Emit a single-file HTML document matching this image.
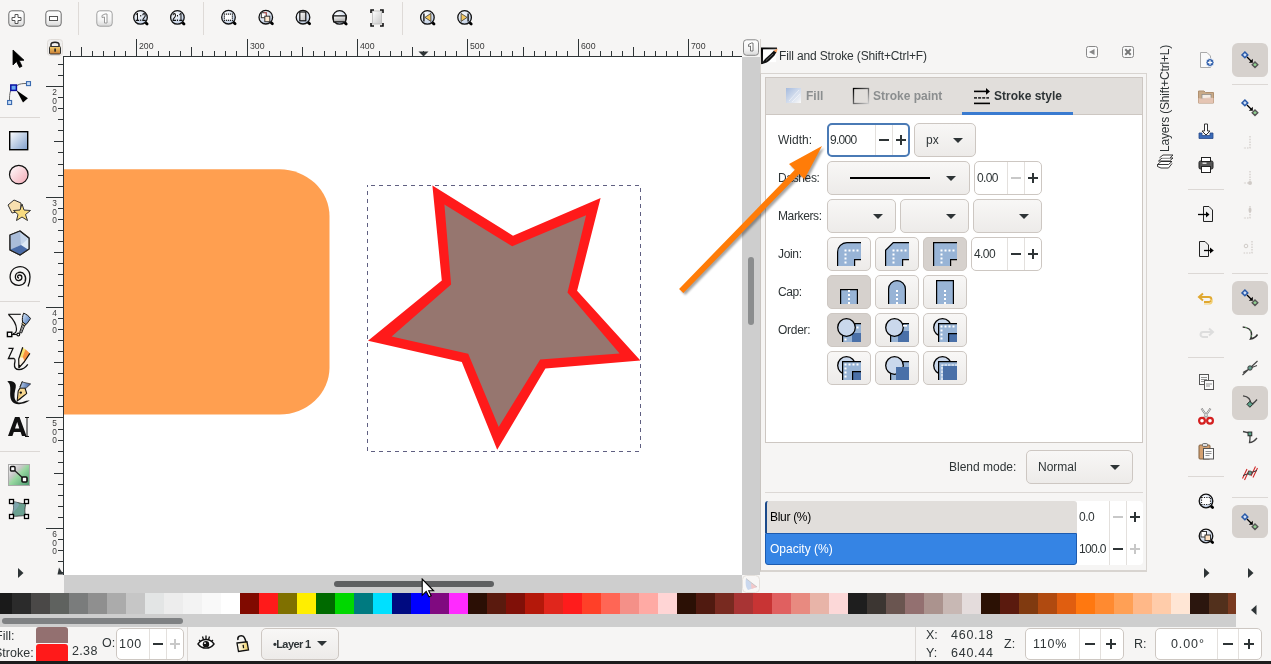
<!DOCTYPE html>
<html><head><meta charset="utf-8"><style>
*{box-sizing:border-box;margin:0;padding:0}
html,body{width:1271px;height:664px;overflow:hidden;background:#f6f5f4;font-family:"Liberation Sans", sans-serif;color:#2e3436}
.a{position:absolute}
.t{position:absolute;white-space:nowrap;line-height:1}
.btn{position:absolute;border:1px solid #cdc7c2;border-radius:5px;background:linear-gradient(#f8f7f6,#edebe9)}
.act{background:#d6d1cd;border-color:#cdc7c2}
.spin{position:absolute;border:1px solid #cdc7c2;border-radius:5px;background:#fff}
.sep{position:absolute;background:#e3e0dd}
.tri{position:absolute;width:0;height:0;border-left:5px solid transparent;border-right:5px solid transparent;border-top:5px solid #2e3436}
</style></head><body><div style="position:absolute;left:0;top:0;width:1271px;height:664px;will-change:transform">

<div class="a" style="left:64px;top:57px;width:678px;height:518px;background:#fff"></div>
<svg class="a" style="left:0;top:0" width="761" height="575" shape-rendering="crispEdges">
<g fill="#2e3436">
<rect x="63" y="56" width="679" height="1"/>
<rect x="63" y="56" width="1" height="519"/>
<rect x="70" y="51" width="1" height="5"/><rect x="81" y="47" width="1" height="9"/><rect x="92" y="51" width="1" height="5"/><rect x="103" y="51" width="1" height="5"/><rect x="114" y="51" width="1" height="5"/><rect x="125" y="51" width="1" height="5"/><rect x="136" y="39" width="1" height="17"/><rect x="147" y="51" width="1" height="5"/><rect x="158" y="51" width="1" height="5"/><rect x="169" y="51" width="1" height="5"/><rect x="180" y="51" width="1" height="5"/><rect x="191" y="47" width="1" height="9"/><rect x="202" y="51" width="1" height="5"/><rect x="214" y="51" width="1" height="5"/><rect x="225" y="51" width="1" height="5"/><rect x="236" y="51" width="1" height="5"/><rect x="247" y="39" width="1" height="17"/><rect x="258" y="51" width="1" height="5"/><rect x="269" y="51" width="1" height="5"/><rect x="280" y="51" width="1" height="5"/><rect x="291" y="51" width="1" height="5"/><rect x="302" y="47" width="1" height="9"/><rect x="313" y="51" width="1" height="5"/><rect x="324" y="51" width="1" height="5"/><rect x="335" y="51" width="1" height="5"/><rect x="346" y="51" width="1" height="5"/><rect x="357" y="39" width="1" height="17"/><rect x="368" y="51" width="1" height="5"/><rect x="379" y="51" width="1" height="5"/><rect x="390" y="51" width="1" height="5"/><rect x="401" y="51" width="1" height="5"/><rect x="412" y="47" width="1" height="9"/><rect x="423" y="51" width="1" height="5"/><rect x="434" y="51" width="1" height="5"/><rect x="445" y="51" width="1" height="5"/><rect x="456" y="51" width="1" height="5"/><rect x="467" y="39" width="1" height="17"/><rect x="479" y="51" width="1" height="5"/><rect x="490" y="51" width="1" height="5"/><rect x="501" y="51" width="1" height="5"/><rect x="512" y="51" width="1" height="5"/><rect x="523" y="47" width="1" height="9"/><rect x="534" y="51" width="1" height="5"/><rect x="545" y="51" width="1" height="5"/><rect x="556" y="51" width="1" height="5"/><rect x="567" y="51" width="1" height="5"/><rect x="578" y="39" width="1" height="17"/><rect x="589" y="51" width="1" height="5"/><rect x="600" y="51" width="1" height="5"/><rect x="611" y="51" width="1" height="5"/><rect x="622" y="51" width="1" height="5"/><rect x="633" y="47" width="1" height="9"/><rect x="644" y="51" width="1" height="5"/><rect x="655" y="51" width="1" height="5"/><rect x="666" y="51" width="1" height="5"/><rect x="677" y="51" width="1" height="5"/><rect x="688" y="39" width="1" height="17"/><rect x="699" y="51" width="1" height="5"/><rect x="710" y="51" width="1" height="5"/><rect x="721" y="51" width="1" height="5"/><rect x="732" y="51" width="1" height="5"/><rect x="58" y="64" width="5" height="1"/><rect x="58" y="75" width="5" height="1"/><rect x="46" y="86" width="17" height="1"/><rect x="58" y="97" width="5" height="1"/><rect x="58" y="108" width="5" height="1"/><rect x="58" y="119" width="5" height="1"/><rect x="58" y="130" width="5" height="1"/><rect x="54" y="141" width="9" height="1"/><rect x="58" y="152" width="5" height="1"/><rect x="58" y="164" width="5" height="1"/><rect x="58" y="175" width="5" height="1"/><rect x="58" y="186" width="5" height="1"/><rect x="46" y="197" width="17" height="1"/><rect x="58" y="208" width="5" height="1"/><rect x="58" y="219" width="5" height="1"/><rect x="58" y="230" width="5" height="1"/><rect x="58" y="241" width="5" height="1"/><rect x="54" y="252" width="9" height="1"/><rect x="58" y="263" width="5" height="1"/><rect x="58" y="274" width="5" height="1"/><rect x="58" y="285" width="5" height="1"/><rect x="58" y="296" width="5" height="1"/><rect x="46" y="307" width="17" height="1"/><rect x="58" y="318" width="5" height="1"/><rect x="58" y="329" width="5" height="1"/><rect x="58" y="340" width="5" height="1"/><rect x="58" y="351" width="5" height="1"/><rect x="54" y="362" width="9" height="1"/><rect x="58" y="373" width="5" height="1"/><rect x="58" y="384" width="5" height="1"/><rect x="58" y="395" width="5" height="1"/><rect x="58" y="406" width="5" height="1"/><rect x="46" y="417" width="17" height="1"/><rect x="58" y="429" width="5" height="1"/><rect x="58" y="440" width="5" height="1"/><rect x="58" y="451" width="5" height="1"/><rect x="58" y="462" width="5" height="1"/><rect x="54" y="473" width="9" height="1"/><rect x="58" y="484" width="5" height="1"/><rect x="58" y="495" width="5" height="1"/><rect x="58" y="506" width="5" height="1"/><rect x="58" y="517" width="5" height="1"/><rect x="46" y="528" width="17" height="1"/><rect x="58" y="539" width="5" height="1"/><rect x="58" y="550" width="5" height="1"/><rect x="58" y="561" width="5" height="1"/><rect x="58" y="572" width="5" height="1"/>
</g>
<g fill="#3a3a3a" font-family="Liberation Sans" font-size="9.5" shape-rendering="auto"><text transform="translate(139 49) scale(0.9 1)" font-size="9.7">200</text><text transform="translate(250 49) scale(0.9 1)" font-size="9.7">300</text><text transform="translate(360 49) scale(0.9 1)" font-size="9.7">400</text><text transform="translate(470 49) scale(0.9 1)" font-size="9.7">500</text><text transform="translate(581 49) scale(0.9 1)" font-size="9.7">600</text><text transform="translate(691 49) scale(0.9 1)" font-size="9.7">700</text><text transform="translate(54.5 95.4) scale(0.88 1)" text-anchor="middle">2</text><text transform="translate(54.5 103.7) scale(0.88 1)" text-anchor="middle">0</text><text transform="translate(54.5 111.9) scale(0.88 1)" text-anchor="middle">0</text><text transform="translate(54.5 206.4) scale(0.88 1)" text-anchor="middle">3</text><text transform="translate(54.5 214.7) scale(0.88 1)" text-anchor="middle">0</text><text transform="translate(54.5 222.9) scale(0.88 1)" text-anchor="middle">0</text><text transform="translate(54.5 316.4) scale(0.88 1)" text-anchor="middle">4</text><text transform="translate(54.5 324.6) scale(0.88 1)" text-anchor="middle">0</text><text transform="translate(54.5 332.9) scale(0.88 1)" text-anchor="middle">0</text><text transform="translate(54.5 426.4) scale(0.88 1)" text-anchor="middle">5</text><text transform="translate(54.5 434.6) scale(0.88 1)" text-anchor="middle">0</text><text transform="translate(54.5 442.9) scale(0.88 1)" text-anchor="middle">0</text><text transform="translate(54.5 537.4) scale(0.88 1)" text-anchor="middle">6</text><text transform="translate(54.5 545.6) scale(0.88 1)" text-anchor="middle">0</text><text transform="translate(54.5 553.9) scale(0.88 1)" text-anchor="middle">0</text></g>
</svg>
<svg class="a" style="left:418px;top:51px" width="12" height="6"><path d="M0.5 0.5 L10.5 0.5 L5.5 5.5Z" fill="#2e3436"/></svg>
<svg class="a" style="left:56px;top:566px" width="8" height="10"><path d="M3 1.5 L7.5 8.5 L1.5 8.5 Z" fill="#2e3436"/></svg>
<div class="a" style="left:742px;top:57px;width:18px;height:518px;background:#cecece"></div>
<div class="a" style="left:748px;top:257px;width:6px;height:68px;background:#8b8d8e;border-radius:3px"></div>
<div class="a" style="left:64px;top:575px;width:678px;height:18px;background:#cecece"></div>
<div class="a" style="left:334px;top:581px;width:160px;height:6px;background:#5f6162;border-radius:3px"></div>
<div class="a" style="left:0;top:593px;width:1236px;height:34px;background:#cecece"></div>
<div class="a" style="left:2px;top:618px;width:181px;height:6px;background:#7f8183;border-radius:3px"></div>
<svg class="a" style="left:0;top:0" width="1236" height="620" shape-rendering="crispEdges"><rect x="-7" y="593" width="19" height="21" fill="#1a1a1a"/><rect x="12" y="593" width="19" height="21" fill="#2b2b2b"/><rect x="31" y="593" width="19" height="21" fill="#4a4847"/><rect x="50" y="593" width="19" height="21" fill="#5f625f"/><rect x="69" y="593" width="19" height="21" fill="#7a7c7c"/><rect x="88" y="593" width="19" height="21" fill="#8f8f8f"/><rect x="107" y="593" width="19" height="21" fill="#ababab"/><rect x="126" y="593" width="19" height="21" fill="#c6c6c6"/><rect x="145" y="593" width="19" height="21" fill="#e3e5e5"/><rect x="164" y="593" width="19" height="21" fill="#ededed"/><rect x="183" y="593" width="19" height="21" fill="#f3f3f3"/><rect x="202" y="593" width="19" height="21" fill="#f9f9f9"/><rect x="221" y="593" width="19" height="21" fill="#ffffff"/><rect x="240" y="593" width="19" height="21" fill="#800a00"/><rect x="259" y="593" width="19" height="21" fill="#ff1a1a"/><rect x="278" y="593" width="19" height="21" fill="#7f7000"/><rect x="297" y="593" width="19" height="21" fill="#ffee00"/><rect x="316" y="593" width="19" height="21" fill="#006a00"/><rect x="335" y="593" width="19" height="21" fill="#00d800"/><rect x="354" y="593" width="19" height="21" fill="#007a80"/><rect x="373" y="593" width="19" height="21" fill="#00e0ff"/><rect x="392" y="593" width="19" height="21" fill="#000a80"/><rect x="411" y="593" width="19" height="21" fill="#0000ff"/><rect x="430" y="593" width="19" height="21" fill="#800a80"/><rect x="449" y="593" width="19" height="21" fill="#ff2aff"/><rect x="468" y="593" width="19" height="21" fill="#2b0f05"/><rect x="487" y="593" width="19" height="21" fill="#5a1a0e"/><rect x="506" y="593" width="19" height="21" fill="#801008"/><rect x="525" y="593" width="19" height="21" fill="#b4180a"/><rect x="544" y="593" width="19" height="21" fill="#e0261c"/><rect x="563" y="593" width="19" height="21" fill="#ff1c1c"/><rect x="582" y="593" width="19" height="21" fill="#ff4028"/><rect x="601" y="593" width="19" height="21" fill="#ff6655"/><rect x="620" y="593" width="19" height="21" fill="#f49088"/><rect x="639" y="593" width="19" height="21" fill="#ffaaa4"/><rect x="658" y="593" width="19" height="21" fill="#ffd5d5"/><rect x="677" y="593" width="19" height="21" fill="#2b1005"/><rect x="696" y="593" width="19" height="21" fill="#501a10"/><rect x="715" y="593" width="19" height="21" fill="#782a20"/><rect x="734" y="593" width="19" height="21" fill="#a83434"/><rect x="753" y="593" width="19" height="21" fill="#c83434"/><rect x="772" y="593" width="19" height="21" fill="#e06060"/><rect x="791" y="593" width="19" height="21" fill="#e88a80"/><rect x="810" y="593" width="19" height="21" fill="#e8b4a8"/><rect x="829" y="593" width="19" height="21" fill="#fcd8d8"/><rect x="848" y="593" width="19" height="21" fill="#1e1e1e"/><rect x="867" y="593" width="19" height="21" fill="#3c3632"/><rect x="886" y="593" width="19" height="21" fill="#6a5550"/><rect x="905" y="593" width="19" height="21" fill="#937070"/><rect x="924" y="593" width="19" height="21" fill="#ab938e"/><rect x="943" y="593" width="19" height="21" fill="#c8b8b4"/><rect x="962" y="593" width="19" height="21" fill="#e4dcdc"/><rect x="981" y="593" width="19" height="21" fill="#2b1104"/><rect x="1000" y="593" width="19" height="21" fill="#5a1a0e"/><rect x="1019" y="593" width="19" height="21" fill="#803a10"/><rect x="1038" y="593" width="19" height="21" fill="#b04a10"/><rect x="1057" y="593" width="19" height="21" fill="#e05e10"/><rect x="1076" y="593" width="19" height="21" fill="#ff7810"/><rect x="1095" y="593" width="19" height="21" fill="#ff8a30"/><rect x="1114" y="593" width="19" height="21" fill="#ffa055"/><rect x="1133" y="593" width="19" height="21" fill="#ffb888"/><rect x="1152" y="593" width="19" height="21" fill="#ffccaa"/><rect x="1171" y="593" width="19" height="21" fill="#ffe6d5"/><rect x="1190" y="593" width="19" height="21" fill="#2b160e"/><rect x="1209" y="593" width="19" height="21" fill="#52301c"/><rect x="1228" y="593" width="8" height="21" fill="#7a3a20"/></svg>
<div class="a" style="left:0;top:661px;width:1271px;height:3px;background:#1c1c1c"></div>
<div class="t" style="left:-5px;top:630px;font-size:12.5px;color:#2e3436">Fill:</div>
<div class="t" style="left:-6px;top:647px;font-size:12.5px;color:#2e3436">Stroke:</div>
<div class="a" style="left:36px;top:627px;width:32px;height:16px;background:#937070;border-radius:3px 3px 0 0"></div>
<div class="a" style="left:36px;top:644px;width:32px;height:17px;background:#ff1a1a;border-radius:3px 3px 0 0"></div>
<div class="t" style="left:72px;top:645px;font-size:12.5px;color:#2e3436;letter-spacing:0.35px">2.38</div>
<div class="t" style="left:102px;top:637px;font-size:12.5px;color:#2e3436">O:</div>
<div class="spin" style="left:116px;top:628px;width:68px;height:32px"></div>
<div class="sep" style="left:149px;top:629px;width:1px;height:30px"></div>
<div class="sep" style="left:166px;top:629px;width:1px;height:30px"></div>
<div class="t" style="left:119px;top:638px;font-size:12.5px;color:#2e3436;letter-spacing:0.7px">100</div>
<div class="a" style="left:153px;top:643px;width:10px;height:2px;background:#2e3436"></div>
<div class="a" style="left:170px;top:643px;width:10px;height:2px;background:#c8c8c8"></div><div class="a" style="left:174px;top:639px;width:2px;height:10px;background:#c8c8c8"></div>
<div class="a" style="left:187px;top:627px;width:1px;height:34px;background:#dcd8d5"></div>
<div class="btn" style="left:261px;top:628px;width:78px;height:32px"></div>
<div class="t" style="left:273px;top:639px;font-size:11px;font-weight:bold;color:#2e3436;letter-spacing:-0.6px">&#8226;Layer 1</div>
<div class="tri" style="left:317px;top:641px"></div>
<div class="a" style="left:915px;top:627px;width:1px;height:34px;background:#dcd8d5"></div>
<div class="t" style="left:926px;top:629px;font-size:12.5px;color:#2e3436">X:</div>
<div class="t" style="left:926px;top:647px;font-size:12.5px;color:#2e3436">Y:</div>
<div class="t" style="left:951px;top:629px;font-size:12.5px;color:#2e3436;letter-spacing:0.75px">460.18</div>
<div class="t" style="left:951px;top:647px;font-size:12.5px;color:#2e3436;letter-spacing:0.75px">640.44</div>
<div class="t" style="left:1004px;top:638px;font-size:12.5px;color:#2e3436">Z:</div>
<div class="spin" style="left:1025px;top:628px;width:99px;height:32px"></div>
<div class="sep" style="left:1079px;top:629px;width:1px;height:30px"></div>
<div class="sep" style="left:1100px;top:629px;width:1px;height:30px"></div>
<div class="t" style="left:1033px;top:638px;font-size:12.5px;color:#2e3436;letter-spacing:0.75px">110%</div>
<div class="a" style="left:1085px;top:643px;width:10px;height:2px;background:#2e3436"></div>
<div class="a" style="left:1106px;top:643px;width:10px;height:2px;background:#2e3436"></div><div class="a" style="left:1110px;top:639px;width:2px;height:10px;background:#2e3436"></div>
<div class="t" style="left:1134px;top:638px;font-size:12.5px;color:#2e3436">R:</div>
<div class="spin" style="left:1155px;top:628px;width:107px;height:32px"></div>
<div class="sep" style="left:1217px;top:629px;width:1px;height:30px"></div>
<div class="sep" style="left:1238px;top:629px;width:1px;height:30px"></div>
<div class="t" style="left:1171px;top:638px;font-size:12.5px;color:#2e3436;letter-spacing:0.9px">0.00&#176;</div>
<div class="a" style="left:1223px;top:643px;width:10px;height:2px;background:#2e3436"></div>
<div class="a" style="left:1244px;top:643px;width:10px;height:2px;background:#2e3436"></div><div class="a" style="left:1248px;top:639px;width:2px;height:10px;background:#2e3436"></div>
<div class="t" style="left:779px;top:50px;font-size:12px;color:#2e3436;letter-spacing:-0.14px">Fill and Stroke (Shift+Ctrl+F)</div>
<div class="a" style="left:760px;top:73px;width:387px;height:499px;border:1px solid #d8d4d0;border-left-color:#c8c4c0;border-bottom-width:2px"></div>
<div class="a" style="left:765px;top:77px;width:378px;height:366px;border:1px solid #cdc7c2;background:#fff"></div>
<div class="a" style="left:766px;top:78px;width:376px;height:37px;background:#e1dedb;border-bottom:1px solid #cdc7c2"></div>
<div class="a" style="left:962px;top:112px;width:111px;height:3px;background:#3a7bd0"></div>
<div class="t" style="left:806px;top:90px;font-size:12px;font-weight:bold;color:#8b8e8f">Fill</div>
<div class="t" style="left:873px;top:90px;font-size:12px;font-weight:bold;color:#8b8e8f">Stroke paint</div>
<div class="t" style="left:994px;top:90px;font-size:12px;font-weight:bold;color:#2e3436">Stroke style</div>
<div class="t" style="left:778px;top:134px;font-size:12px;color:#2e3436;letter-spacing:0px">Width:</div>
<div class="t" style="left:778px;top:172px;font-size:12px;color:#2e3436;letter-spacing:-0.35px">Dashes:</div>
<div class="t" style="left:778px;top:210px;font-size:12px;color:#2e3436;letter-spacing:-0.38px">Markers:</div>
<div class="t" style="left:778px;top:248px;font-size:12px;color:#2e3436;letter-spacing:-0.34px">Join:</div>
<div class="t" style="left:778px;top:286px;font-size:12px;color:#2e3436;letter-spacing:-0.45px">Cap:</div>
<div class="t" style="left:778px;top:324px;font-size:12px;color:#2e3436;letter-spacing:-0.28px">Order:</div>
<div class="a" style="left:827px;top:123px;width:83px;height:34px;border:2px solid #4a7ab5;border-radius:5px;background:#fff"></div>
<div class="sep" style="left:875px;top:125px;width:1px;height:30px"></div>
<div class="sep" style="left:892px;top:125px;width:1px;height:30px"></div>
<div class="t" style="left:830px;top:134px;font-size:12px;color:#2e3436;letter-spacing:-0.7px">9.000</div>
<div class="a" style="left:879px;top:139px;width:10px;height:2px;background:#2e3436"></div>
<div class="a" style="left:896px;top:139px;width:10px;height:2px;background:#2e3436"></div><div class="a" style="left:900px;top:135px;width:2px;height:10px;background:#2e3436"></div>
<div class="btn" style="left:914px;top:123px;width:62px;height:34px"></div>
<div class="t" style="left:926px;top:134px;font-size:12px;color:#2e3436">px</div>
<div class="tri" style="left:953px;top:138px"></div>
<div class="btn" style="left:827px;top:161px;width:143px;height:34px"></div>
<div class="a" style="left:850px;top:177px;width:80px;height:2px;background:#000"></div>
<div class="tri" style="left:946px;top:176px"></div>
<div class="spin" style="left:974px;top:161px;width:68px;height:34px"></div>
<div class="sep" style="left:1007px;top:162px;width:1px;height:32px"></div>
<div class="sep" style="left:1024px;top:162px;width:1px;height:32px"></div>
<div class="t" style="left:977px;top:172px;font-size:12px;color:#2e3436;letter-spacing:-0.65px">0.00</div>
<div class="a" style="left:1011px;top:177px;width:10px;height:2px;background:#c8c8c8"></div>
<div class="a" style="left:1028px;top:177px;width:10px;height:2px;background:#2e3436"></div><div class="a" style="left:1032px;top:173px;width:2px;height:10px;background:#2e3436"></div>
<div class="btn" style="left:827px;top:199px;width:69px;height:34px"></div>
<div class="tri" style="left:873px;top:214px"></div>
<div class="btn" style="left:900px;top:199px;width:69px;height:34px"></div>
<div class="tri" style="left:946px;top:214px"></div>
<div class="btn" style="left:973px;top:199px;width:69px;height:34px"></div>
<div class="tri" style="left:1019px;top:214px"></div>
<div class="btn" style="left:827px;top:237px;width:44px;height:34px"></div>
<div class="btn" style="left:875px;top:237px;width:44px;height:34px"></div>
<div class="btn act" style="left:923px;top:237px;width:44px;height:34px"></div>
<div class="spin" style="left:971px;top:237px;width:71px;height:34px"></div>
<div class="sep" style="left:1007px;top:238px;width:1px;height:32px"></div>
<div class="sep" style="left:1024px;top:238px;width:1px;height:32px"></div>
<div class="t" style="left:974px;top:248px;font-size:12px;color:#2e3436;letter-spacing:-0.6px">4.00</div>
<div class="a" style="left:1011px;top:253px;width:10px;height:2px;background:#2e3436"></div>
<div class="a" style="left:1028px;top:253px;width:10px;height:2px;background:#2e3436"></div><div class="a" style="left:1032px;top:249px;width:2px;height:10px;background:#2e3436"></div>
<div class="btn act" style="left:827px;top:275px;width:44px;height:34px"></div>
<div class="btn" style="left:875px;top:275px;width:44px;height:34px"></div>
<div class="btn" style="left:923px;top:275px;width:44px;height:34px"></div>
<div class="btn act" style="left:827px;top:313px;width:44px;height:34px"></div>
<div class="btn" style="left:875px;top:313px;width:44px;height:34px"></div>
<div class="btn" style="left:923px;top:313px;width:44px;height:34px"></div>
<div class="btn" style="left:827px;top:351px;width:44px;height:34px"></div>
<div class="btn" style="left:875px;top:351px;width:44px;height:34px"></div>
<div class="btn" style="left:923px;top:351px;width:44px;height:34px"></div>
<div class="t" style="left:949px;top:461px;font-size:12px;color:#2e3436">Blend mode:</div>
<div class="btn" style="left:1026px;top:450px;width:107px;height:34px"></div>
<div class="t" style="left:1038px;top:461px;font-size:12px;color:#2e3436">Normal</div>
<div class="tri" style="left:1110px;top:465px"></div>
<div class="a" style="left:765px;top:492px;width:378px;height:1px;background:#dcd8d5"></div>
<div class="a" style="left:765px;top:501px;width:378px;height:64px;background:#fff;border-radius:4px"></div>
<div class="a" style="left:765px;top:501px;width:312px;height:32px;background:#e1dedb;border-left:2px solid #1c4a8a;border-radius:3px 3px 0 0"></div>
<div class="a" style="left:765px;top:533px;width:312px;height:32px;background:#3584e4;border:1px solid #1c5bb0;border-radius:0 0 3px 3px"></div>
<div class="t" style="left:770px;top:511px;font-size:12px;color:#000;letter-spacing:-0.3px">Blur (%)</div>
<div class="t" style="left:770px;top:543px;font-size:12px;color:#fff">Opacity (%)</div>
<div class="sep" style="left:1109px;top:501px;width:1px;height:64px"></div>
<div class="sep" style="left:1126px;top:501px;width:1px;height:64px"></div>
<div class="t" style="left:1079px;top:511px;font-size:12px;color:#2e3436;letter-spacing:-0.5px">0.0</div>
<div class="t" style="left:1079px;top:543px;font-size:12px;color:#2e3436;letter-spacing:-0.65px">100.0</div>
<div class="a" style="left:1113px;top:516px;width:10px;height:2px;background:#c8c8c8"></div>
<div class="a" style="left:1130px;top:516px;width:10px;height:2px;background:#2e3436"></div><div class="a" style="left:1134px;top:512px;width:2px;height:10px;background:#2e3436"></div>
<div class="a" style="left:1113px;top:548px;width:10px;height:2px;background:#2e3436"></div>
<div class="a" style="left:1130px;top:548px;width:10px;height:2px;background:#c8c8c8"></div><div class="a" style="left:1134px;top:544px;width:2px;height:10px;background:#c8c8c8"></div>
<svg class="a" style="left:64px;top:57px" width="678" height="518">
<rect x="-60" y="112.30000000000001" width="325.5" height="245.2" rx="50" ry="47" fill="#ff9f50"/>
<polygon points="368.4,128.5 449.0,178.7 536.6,141.1 513.1,233.8 576.4,303.4 481.4,311.4 433.2,392.8 397.8,305.0 304.0,283.7 377.8,223.6" fill="#ff1a1a"/>
<polygon points="380.4,147.5 448.2,189.3 522.1,158.3 503.5,235.6 555.6,296.5 476.2,302.4 434.7,369.9 404.2,296.7 327.6,279.5 387.1,227.4" fill="#96766f"/>
<g fill="#606082" shape-rendering="crispEdges"><rect x="307" y="128" width="4" height="1"/><rect x="307" y="394" width="4" height="1"/><rect x="315" y="128" width="4" height="1"/><rect x="315" y="394" width="4" height="1"/><rect x="323" y="128" width="4" height="1"/><rect x="323" y="394" width="4" height="1"/><rect x="331" y="128" width="4" height="1"/><rect x="331" y="394" width="4" height="1"/><rect x="339" y="128" width="4" height="1"/><rect x="339" y="394" width="4" height="1"/><rect x="347" y="128" width="4" height="1"/><rect x="347" y="394" width="4" height="1"/><rect x="355" y="128" width="4" height="1"/><rect x="355" y="394" width="4" height="1"/><rect x="363" y="128" width="4" height="1"/><rect x="363" y="394" width="4" height="1"/><rect x="371" y="128" width="4" height="1"/><rect x="371" y="394" width="4" height="1"/><rect x="379" y="128" width="4" height="1"/><rect x="379" y="394" width="4" height="1"/><rect x="387" y="128" width="4" height="1"/><rect x="387" y="394" width="4" height="1"/><rect x="395" y="128" width="4" height="1"/><rect x="395" y="394" width="4" height="1"/><rect x="403" y="128" width="4" height="1"/><rect x="403" y="394" width="4" height="1"/><rect x="411" y="128" width="4" height="1"/><rect x="411" y="394" width="4" height="1"/><rect x="419" y="128" width="4" height="1"/><rect x="419" y="394" width="4" height="1"/><rect x="427" y="128" width="4" height="1"/><rect x="427" y="394" width="4" height="1"/><rect x="435" y="128" width="4" height="1"/><rect x="435" y="394" width="4" height="1"/><rect x="443" y="128" width="4" height="1"/><rect x="443" y="394" width="4" height="1"/><rect x="451" y="128" width="4" height="1"/><rect x="451" y="394" width="4" height="1"/><rect x="459" y="128" width="4" height="1"/><rect x="459" y="394" width="4" height="1"/><rect x="467" y="128" width="4" height="1"/><rect x="467" y="394" width="4" height="1"/><rect x="475" y="128" width="4" height="1"/><rect x="475" y="394" width="4" height="1"/><rect x="483" y="128" width="4" height="1"/><rect x="483" y="394" width="4" height="1"/><rect x="491" y="128" width="4" height="1"/><rect x="491" y="394" width="4" height="1"/><rect x="499" y="128" width="4" height="1"/><rect x="499" y="394" width="4" height="1"/><rect x="507" y="128" width="4" height="1"/><rect x="507" y="394" width="4" height="1"/><rect x="515" y="128" width="4" height="1"/><rect x="515" y="394" width="4" height="1"/><rect x="523" y="128" width="4" height="1"/><rect x="523" y="394" width="4" height="1"/><rect x="531" y="128" width="4" height="1"/><rect x="531" y="394" width="4" height="1"/><rect x="539" y="128" width="4" height="1"/><rect x="539" y="394" width="4" height="1"/><rect x="547" y="128" width="4" height="1"/><rect x="547" y="394" width="4" height="1"/><rect x="555" y="128" width="4" height="1"/><rect x="555" y="394" width="4" height="1"/><rect x="563" y="128" width="4" height="1"/><rect x="563" y="394" width="4" height="1"/><rect x="571" y="128" width="4" height="1"/><rect x="571" y="394" width="4" height="1"/><rect x="303" y="128" width="1" height="2"/><rect x="303" y="134" width="1" height="4"/><rect x="303" y="142" width="1" height="4"/><rect x="303" y="150" width="1" height="4"/><rect x="303" y="158" width="1" height="4"/><rect x="303" y="166" width="1" height="4"/><rect x="303" y="174" width="1" height="4"/><rect x="303" y="182" width="1" height="4"/><rect x="303" y="190" width="1" height="4"/><rect x="303" y="198" width="1" height="4"/><rect x="303" y="206" width="1" height="4"/><rect x="303" y="214" width="1" height="4"/><rect x="303" y="222" width="1" height="4"/><rect x="303" y="230" width="1" height="4"/><rect x="303" y="238" width="1" height="4"/><rect x="303" y="246" width="1" height="4"/><rect x="303" y="254" width="1" height="4"/><rect x="303" y="262" width="1" height="4"/><rect x="303" y="270" width="1" height="4"/><rect x="303" y="278" width="1" height="4"/><rect x="303" y="286" width="1" height="4"/><rect x="303" y="294" width="1" height="4"/><rect x="303" y="302" width="1" height="4"/><rect x="303" y="310" width="1" height="4"/><rect x="303" y="318" width="1" height="4"/><rect x="303" y="326" width="1" height="4"/><rect x="303" y="334" width="1" height="4"/><rect x="303" y="342" width="1" height="4"/><rect x="303" y="350" width="1" height="4"/><rect x="303" y="358" width="1" height="4"/><rect x="303" y="366" width="1" height="4"/><rect x="303" y="374" width="1" height="4"/><rect x="303" y="382" width="1" height="4"/><rect x="303" y="390" width="1" height="4"/><rect x="576" y="131" width="1" height="4"/><rect x="576" y="139" width="1" height="4"/><rect x="576" y="147" width="1" height="4"/><rect x="576" y="155" width="1" height="4"/><rect x="576" y="163" width="1" height="4"/><rect x="576" y="171" width="1" height="4"/><rect x="576" y="179" width="1" height="4"/><rect x="576" y="187" width="1" height="4"/><rect x="576" y="195" width="1" height="4"/><rect x="576" y="203" width="1" height="4"/><rect x="576" y="211" width="1" height="4"/><rect x="576" y="219" width="1" height="4"/><rect x="576" y="227" width="1" height="4"/><rect x="576" y="235" width="1" height="4"/><rect x="576" y="243" width="1" height="4"/><rect x="576" y="251" width="1" height="4"/><rect x="576" y="259" width="1" height="4"/><rect x="576" y="267" width="1" height="4"/><rect x="576" y="275" width="1" height="4"/><rect x="576" y="283" width="1" height="4"/><rect x="576" y="291" width="1" height="4"/><rect x="576" y="299" width="1" height="4"/><rect x="576" y="307" width="1" height="4"/><rect x="576" y="315" width="1" height="4"/><rect x="576" y="323" width="1" height="4"/><rect x="576" y="331" width="1" height="4"/><rect x="576" y="339" width="1" height="4"/><rect x="576" y="347" width="1" height="4"/><rect x="576" y="355" width="1" height="4"/><rect x="576" y="363" width="1" height="4"/><rect x="576" y="371" width="1" height="4"/><rect x="576" y="379" width="1" height="4"/><rect x="576" y="387" width="1" height="4"/></g>
</svg>
<svg class="a" style="left:0;top:0;pointer-events:none" width="1271" height="664">
<defs><filter id="sh" x="-20%" y="-20%" width="140%" height="140%"><feGaussianBlur stdDeviation="1.2"/></filter></defs>
<g transform="translate(2,2)" opacity="0.35" filter="url(#sh)"><path d="M679.05 288.9 L794.9 169.75 L789 163.9 L822 146.1 L804.4 179.2 L799.15 173.98 L683.35 293.1 Z" fill="#000"/></g>
<path d="M679.05 288.9 L794.9 169.75 L789 163.9 L822 146.1 L804.4 179.2 L799.15 173.98 L683.35 293.1 Z" fill="#ff7c08"/>
</svg>
<div class="a" style="left:0;top:117px;width:40px;height:1px;background:#dcd8d5"></div>
<div class="a" style="left:0;top:301px;width:40px;height:1px;background:#dcd8d5"></div>
<div class="a" style="left:0;top:451px;width:40px;height:1px;background:#dcd8d5"></div>
<svg class="a" style="left:10px;top:48px" width="18" height="22" viewBox="0 0 18 22" ><path d="M3 2 L3 17 L6.5 13.5 L9.5 19.5 L12 18.3 L9.2 12.4 L14 12.2 Z" fill="#000" stroke="#000" stroke-width="0.8" stroke-linejoin="round"/></svg>
<svg class="a" style="left:4px;top:78px" width="30" height="30" viewBox="0 0 30 30" ><path d="M13 7.5 C16 5.5 19 5.5 22.5 5.5 M6.5 13 C5.5 16 5.5 19 5.5 22.5" fill="none" stroke="#666" stroke-width="1"/><rect x="22.5" y="3.6" width="4" height="4" fill="#c8dcf4" stroke="#3a6ab0" stroke-width="1.1"/><rect x="3.6" y="22.5" width="4" height="4" fill="#c8dcf4" stroke="#3a6ab0" stroke-width="1.1"/><rect x="6.8" y="7" width="5.6" height="5.4" fill="#68a8f0" stroke="#0a10a0" stroke-width="1.5"/><path d="M12.4 12.2 L23.9 20.3 L19 24.6 Z" fill="#000"/></svg>
<svg class="a" style="left:8px;top:130px" width="22" height="22" viewBox="0 0 22 22" ><defs><linearGradient id="gr1" x1="0" y1="0" x2="1" y2="1"><stop offset="0" stop-color="#fff"/><stop offset="1" stop-color="#7e9ecb"/></linearGradient></defs><rect x="1.7" y="1.7" width="18" height="18" fill="url(#gr1)" stroke="#000" stroke-width="1.4"/></svg>
<svg class="a" style="left:7px;top:163px" width="24" height="24" viewBox="0 0 24 24" ><defs><linearGradient id="gr2" x1="0" y1="0" x2="1" y2="1"><stop offset="0" stop-color="#fff"/><stop offset="1" stop-color="#f3a8b4"/></linearGradient></defs><circle cx="11.8" cy="11.6" r="9.3" fill="url(#gr2)" stroke="#111" stroke-width="1.2"/></svg>
<svg class="a" style="left:5px;top:197px" width="28" height="26" viewBox="0 0 28 26" ><path d="M3 8 L9 3 L16 6 L15.5 14 L7 16 Z" fill="#f8e0b0" stroke="#333" stroke-width="1"/><path d="M17 7 L19 13 L25.5 13.5 L20.5 17.5 L22.5 23.5 L17 20 L11.5 23.5 L13 17.5 L8.5 13.5 L15 13 Z" fill="#f8dc80" stroke="#333" stroke-width="1" stroke-linejoin="round"/></svg>
<svg class="a" style="left:7px;top:229px" width="26" height="28" viewBox="0 0 26 28" ><path d="M3 6 L13 2 L22 9 L22 20 L13 26 L3 21 Z" fill="#c4d4ea" stroke="#222" stroke-width="1.2" stroke-linejoin="round"/><path d="M3 6 L13 2 L14 16 L3.5 20.5 Z" fill="#a9bcd9"/><path d="M14 16 L22 9 L22 20 L13 26 Z" fill="#dfeaf6"/><path d="M3.5 20.5 L14 16 L21 20.5 L13 25.5 Z" fill="#4a6ca8"/><path d="M3 6 L13 2 L22 9 L22 20 L13 26 L3 21 Z" fill="none" stroke="#222" stroke-width="1.2" stroke-linejoin="round"/></svg>
<svg class="a" style="left:6px;top:264px" width="26" height="26" viewBox="0 0 26 26" ><path d="M13 14 C11 14 11 11 13.5 11 C16.5 11 17 16 13 16.5 C8.5 17 8 10 12.5 8.5 C18 7 21 13 19 18 C17 22 10 22.5 6.5 19 C2.5 15 3.5 6 10 3.5 C17 1 24 5 24 13 C24 17 23 20 22 22.5" fill="none" stroke="#111" stroke-width="1.3"/></svg>
<svg class="a" style="left:5px;top:310px" width="28" height="30" viewBox="0 0 28 30" ><defs><linearGradient id="pc" x1="0" y1="0" x2="1" y2="1"><stop offset="0" stop-color="#e0f0ff"/><stop offset="1" stop-color="#3a68b0"/></linearGradient></defs><path d="M3.2 4.3 H15.8" stroke="#111" stroke-width="1.1"/><path d="M3.6 4.5 C8 9 11.5 14 11.5 19 C11.5 22 10 23.5 8 23.6" fill="none" stroke="#111" stroke-width="1.2"/><rect x="2.4" y="22.2" width="4.4" height="4.4" fill="#fff" stroke="#000" stroke-width="1.4"/><path d="M6.8 24.5 H12" stroke="#111" stroke-width="1.1"/><circle cx="13.3" cy="24.5" r="1.4" fill="#fff" stroke="#000" stroke-width="1.1"/><path d="M14.6 22.6 L16.6 23 L19.6 15.6 L17.2 14.6 Z" fill="#fff" stroke="#111" stroke-width="1"/><path d="M15.6 22.5 L18.3 15.2" stroke="#111" stroke-width="0.6"/><path d="M16.8 14.2 L20.2 15.6 L21.2 13.2 L17.8 11.6 Z" fill="#f0d8a0" stroke="#111" stroke-width="0.8"/><path d="M17.6 12 C17 9 17.5 6 18.6 3.2 C21 4 24 6 25.5 8.6 C24 11 22.5 13 21 14.6 Z" fill="url(#pc)" stroke="#111" stroke-width="1"/></svg>
<svg class="a" style="left:5px;top:345px" width="28" height="28" viewBox="0 0 28 28" ><path d="M3.4 3.4 H8 L3.4 13.5 H9 C10.5 14 10 17 9.5 19 C9 23 11 24.6 14 24.6 C18 24.6 21 22 22.8 19.4" fill="none" stroke="#111" stroke-width="1.3"/><path d="M17.7 2.3 L24.9 8.4 L19.5 16.5 L13.9 22.8 L13.7 14 Z" fill="#f8e070"/><path d="M20.5 4.2 L24.9 8.4 L19.5 16.5 L17.5 12.5 Z" fill="#f89040"/><path d="M13.7 12.5 L18 12.5 L19.5 16.5 L13.9 22.8 Z" fill="#fff4e4"/><path d="M13.9 22.8 L13.8 19.5 L15.8 20.6 Z" fill="#000"/><path d="M17.7 2.3 L13.7 14 L13.9 22.8 L19.5 16.5 L24.9 8.4" fill="none" stroke="#111" stroke-width="1.2" stroke-linejoin="round"/></svg>
<svg class="a" style="left:5px;top:378px" width="28" height="30" viewBox="0 0 28 30" ><defs><linearGradient id="cc" x1="0" y1="0" x2="1" y2="0"><stop offset="0" stop-color="#b8d0f0"/><stop offset="1" stop-color="#3a5a98"/></linearGradient></defs><path d="M2.3 3.4 C6 2.5 10 3.5 10.8 7 C11.3 10 9 14 9.5 19 C10 23 12 24.5 15 24.5 C18 24.5 21 22 24.8 22.6 C21 25 17 26.4 13.5 26.2 C8 26 5.5 22.5 5.2 17.5 C5 12 6.5 6 2.3 3.4 Z" fill="#111"/><path d="M12.2 23 L13.2 13 L15 10 L20 10 L21.7 15.4 C18.5 18 15 21 12.2 23 Z" fill="#f8d890" stroke="#111" stroke-width="1.1" stroke-linejoin="round"/><circle cx="15.8" cy="14.6" r="1.2" fill="#111"/><path d="M12.8 21.5 L15.5 16" stroke="#d0a040" stroke-width="0.6"/><path d="M17.4 3.2 L14.9 9" stroke="#111" stroke-width="1"/><path d="M15 10 L17.2 4 L25.7 5.9 L21.2 10 Z" fill="url(#cc)" stroke="#222" stroke-width="0.7"/></svg>
<svg class="a" style="left:6px;top:415px" width="26" height="24" viewBox="0 0 26 24" ><path d="M2 21 L9 2 L13.5 2 L20.5 21 L16 21 L14.6 17 L7.8 17 L6.4 21 Z M9 13.5 L13.3 13.5 L11.2 7 Z" fill="#111" fill-rule="evenodd"/><path d="M19 2.5 L23 2.5 M21 2.5 L21 21.5 M19 21.5 L23 21.5" stroke="#111" stroke-width="1" fill="none"/></svg>
<svg class="a" style="left:7px;top:463px" width="24" height="24" viewBox="0 0 24 24" ><defs><linearGradient id="gr3" x1="0" y1="0" x2="1" y2="1"><stop offset="0" stop-color="#fff"/><stop offset="0.35" stop-color="#c8c8c8"/><stop offset="0.5" stop-color="#98d8a0"/><stop offset="1" stop-color="#4a9870"/></linearGradient></defs><rect x="1.5" y="1.5" width="21" height="21" fill="url(#gr3)" stroke="#aaa" stroke-width="1"/><path d="M6 6 L17.5 16.5" stroke="#222" stroke-width="1.2"/><rect x="3.5" y="3.5" width="4.5" height="4.5" rx="1" fill="#fff" stroke="#111" stroke-width="1.4"/><rect x="15" y="14" width="5" height="5" rx="1" fill="#fff" stroke="#111" stroke-width="1.6"/></svg>
<svg class="a" style="left:7px;top:497px" width="24" height="24" viewBox="0 0 24 24" ><path d="M5 5 C9 4 15 8 19 6 C18 10 17 15 19 19 C15 18 9 20 5 19 C6 15 8 9 5 5 Z" fill="#6aa090" stroke="#333" stroke-width="0.8"/><path d="M5 5 C9 4 12 6 12 8 C10 12 7 14 5.5 17 C6 13 8 9 5 5Z" fill="#8aa8c0" opacity="0.6"/><rect x="2.5" y="2.5" width="4" height="4" fill="#fff" stroke="#000" stroke-width="1.3"/><rect x="17.5" y="2.5" width="4" height="4" fill="#fff" stroke="#000" stroke-width="1.3"/><rect x="2.5" y="17.5" width="4" height="4" fill="#fff" stroke="#000" stroke-width="1.3"/><rect x="17.5" y="17.5" width="4" height="4" fill="#fff" stroke="#000" stroke-width="1.3"/></svg>
<svg class="a" style="left:18px;top:568px" width="6" height="10" viewBox="0 0 6 10" ><path d="M0 0 L5.5 5 L0 10 Z" fill="#2e3436"/></svg>
<svg class="a" style="left:1204px;top:568px" width="6" height="10" viewBox="0 0 6 10" ><path d="M0 0 L5.5 5 L0 10 Z" fill="#2e3436"/></svg>
<svg class="a" style="left:1248px;top:568px" width="6" height="10" viewBox="0 0 6 10" ><path d="M0 0 L5.5 5 L0 10 Z" fill="#2e3436"/></svg>
<svg class="a" style="left:1251px;top:605px" width="6" height="10" viewBox="0 0 6 10" ><path d="M5.5 0 L0 5 L5.5 10 Z" fill="#2e3436"/></svg>
<svg class="a" style="left:46px;top:38px" width="19" height="20" viewBox="0 0 19 20" ><rect x="1.5" y="1.5" width="15" height="16" rx="3" fill="#f0efee" stroke="#e0dcd8" stroke-width="1"/><path d="M5 9 L5 6.5 C5 3.5 13 3.5 13 6.5 L13 9" fill="none" stroke="#222" stroke-width="1.5"/><defs><linearGradient id="lk" x1="0" y1="0" x2="0" y2="1"><stop offset="0" stop-color="#f4d070"/><stop offset="1" stop-color="#c87a30"/></linearGradient></defs><rect x="3.5" y="8.5" width="11" height="7.5" rx="1" fill="url(#lk)" stroke="#333" stroke-width="1"/><rect x="8.3" y="10.5" width="1.6" height="3.2" fill="#222"/></svg>
<div class="a" style="left:78px;top:2px;width:1px;height:33px;background:#dedad7"></div>
<div class="a" style="left:203px;top:2px;width:1px;height:33px;background:#dedad7"></div>
<div class="a" style="left:402px;top:2px;width:1px;height:33px;background:#dedad7"></div>
<svg class="a" style="left:0;top:0" width="0" height="0"><defs><linearGradient id="bt" x1="0" y1="0" x2="0" y2="1"><stop offset="0" stop-color="#fff"/><stop offset="0.6" stop-color="#f4f4f4"/><stop offset="1" stop-color="#d8d8d8"/></linearGradient><radialGradient id="mg" cx="0.35" cy="0.3" r="0.8"><stop offset="0" stop-color="#fff"/><stop offset="1" stop-color="#b8c8e0"/></radialGradient></defs></svg>
<svg class="a" style="left:7.5px;top:9.5px" width="17" height="17" viewBox="0 0 17 17" ><rect x="0.8" y="0.8" width="15.4" height="15.4" rx="3" fill="url(#bt)" stroke="#6a6a6a" stroke-width="1"/><path d="M7 4.5 H10 V7.5 H13 V10.5 H10 V13.5 H7 V10.5 H4 V7.5 H7 Z" fill="#fff" stroke="#555" stroke-width="1"/></svg>
<svg class="a" style="left:44.5px;top:9.5px" width="17" height="17" viewBox="0 0 17 17" ><rect x="0.8" y="0.8" width="15.4" height="15.4" rx="3" fill="url(#bt)" stroke="#6a6a6a" stroke-width="1"/><rect x="4.5" y="6.5" width="8" height="4" fill="#fff" stroke="#555" stroke-width="1"/></svg>
<svg class="a" style="left:95.5px;top:9.5px" width="17" height="17" viewBox="0 0 17 17" ><rect x="0.8" y="0.8" width="15.4" height="15.4" rx="3" fill="url(#bt)" stroke="#a0a0a0" stroke-width="1"/><path d="M6 5.5 L9 4 L11 4 L11 13 L8.5 13 L8.5 7 L6 7.5 Z" fill="#fff" stroke="#999" stroke-width="1"/></svg>
<svg class="a" style="left:131px;top:8px" width="20" height="20" viewBox="0 0 20 20" ><g transform="translate(0.50 0.40)"><path d="M14 14 L15.6 15.6" stroke="#000" stroke-width="2.8" stroke-linecap="round"/><circle cx="9" cy="9" r="6.8" fill="url(#mg)" stroke="#111" stroke-width="1.3"/><text transform="translate(9.2 12.3) scale(0.74 1)" text-anchor="middle" font-family="Liberation Sans" font-size="10" font-weight="bold" fill="#111">1:2</text></g></svg>
<svg class="a" style="left:168px;top:8px" width="20" height="20" viewBox="0 0 20 20" ><g transform="translate(0.40 0.40)"><path d="M14 14 L15.6 15.6" stroke="#000" stroke-width="2.8" stroke-linecap="round"/><circle cx="9" cy="9" r="6.8" fill="url(#mg)" stroke="#111" stroke-width="1.3"/><text transform="translate(9.2 12.3) scale(0.74 1)" text-anchor="middle" font-family="Liberation Sans" font-size="10" font-weight="bold" fill="#111">2:1</text></g></svg>
<svg class="a" style="left:219px;top:8px" width="20" height="20" viewBox="0 0 20 20" ><g transform="translate(0.50 0.20)"><path d="M14 14 L15.6 15.6" stroke="#000" stroke-width="2.8" stroke-linecap="round"/><circle cx="9" cy="9" r="6.8" fill="url(#mg)" stroke="#111" stroke-width="1.3"/><rect x="4.6" y="5.6" width="8.5" height="6.6" fill="#fff"/><rect x="4.3" y="5.3" width="1.2" height="1.2" fill="#111"/><rect x="4.3" y="11.5" width="1.2" height="1.2" fill="#111"/><rect x="6.3" y="5.3" width="1.2" height="1.2" fill="#111"/><rect x="6.3" y="11.5" width="1.2" height="1.2" fill="#111"/><rect x="8.3" y="5.3" width="1.2" height="1.2" fill="#111"/><rect x="8.3" y="11.5" width="1.2" height="1.2" fill="#111"/><rect x="10.3" y="5.3" width="1.2" height="1.2" fill="#111"/><rect x="10.3" y="11.5" width="1.2" height="1.2" fill="#111"/><rect x="12.3" y="5.3" width="1.2" height="1.2" fill="#111"/><rect x="12.3" y="11.5" width="1.2" height="1.2" fill="#111"/><rect x="4.3" y="7.3" width="1.2" height="1.2" fill="#111"/><rect x="4.3" y="9.3" width="1.2" height="1.2" fill="#111"/><rect x="12.3" y="7.3" width="1.2" height="1.2" fill="#111"/><rect x="12.3" y="9.3" width="1.2" height="1.2" fill="#111"/></g></svg>
<svg class="a" style="left:256px;top:8px" width="20" height="20" viewBox="0 0 20 20" ><g transform="translate(0.80 0.20)"><path d="M14 14 L15.6 15.6" stroke="#000" stroke-width="2.8" stroke-linecap="round"/><circle cx="9" cy="9" r="6.8" fill="url(#mg)" stroke="#111" stroke-width="1.3"/><rect x="4.5" y="4.5" width="5" height="5" fill="#fff" stroke="#333" stroke-width="1"/><path d="M7 4.5 H9.5 V7" fill="none" stroke="#e05050" stroke-width="0.8"/><rect x="8" y="8" width="5" height="5.5" fill="#fde8d0" stroke="#333" stroke-width="1"/></g></svg>
<svg class="a" style="left:294px;top:8px" width="20" height="20" viewBox="0 0 20 20" ><g transform="translate(0.00 0.20)"><path d="M14 14 L15.6 15.6" stroke="#000" stroke-width="2.8" stroke-linecap="round"/><circle cx="9" cy="9" r="6.8" fill="url(#mg)" stroke="#111" stroke-width="1.3"/><defs><linearGradient id="pg" x1="0" y1="0" x2="1" y2="1"><stop offset="0" stop-color="#fff"/><stop offset="1" stop-color="#bbb"/></linearGradient></defs><rect x="5.8" y="3.8" width="6" height="8.8" fill="url(#pg)" stroke="#111" stroke-width="1.2"/></g></svg>
<svg class="a" style="left:330px;top:8px" width="20" height="20" viewBox="0 0 20 20" ><g transform="translate(0.60 0.40)"><path d="M14 14 L15.6 15.6" stroke="#000" stroke-width="2.8" stroke-linecap="round"/><circle cx="9" cy="9" r="6.8" fill="url(#mg)" stroke="#111" stroke-width="1.3"/><defs><linearGradient id="pw" x1="0" y1="0" x2="0.3" y2="1"><stop offset="0" stop-color="#fff"/><stop offset="1" stop-color="#aaa"/></linearGradient></defs><path d="M2.6 7.5 L15.4 7.5 L15 13.5 L3 13.5 Z" fill="url(#pw)" stroke="#111" stroke-width="1.2"/></g></svg>
<svg class="a" style="left:370px;top:9px" width="14" height="18" viewBox="0 0 14 18" ><defs><linearGradient id="cpg" x1="0" y1="0" x2="1" y2="1"><stop offset="0" stop-color="#fff"/><stop offset="1" stop-color="#c8c8c8"/></linearGradient></defs><rect x="2.5" y="2" width="9" height="13" fill="url(#cpg)" stroke="#bbb" stroke-width="0.8"/><path d="M1 4 V1 H4 M10 1 H13 V4 M13 14 V17 H10 M4 17 H1 V14" fill="none" stroke="#111" stroke-width="1.6"/></svg>
<svg class="a" style="left:418px;top:8px" width="20" height="20" viewBox="0 0 20 20" ><g transform="translate(0.40 0.40)"><path d="M14 14 L15.6 15.6" stroke="#000" stroke-width="2.8" stroke-linecap="round"/><circle cx="9" cy="9" r="6.8" fill="url(#mg)" stroke="#111" stroke-width="1.3"/><path d="M5.5 5 V13" stroke="#111" stroke-width="1.4"/><path d="M12.5 5 L6.5 9 L12.5 13 Z" fill="#f4c860" stroke="#333" stroke-width="0.8"/></g></svg>
<svg class="a" style="left:455px;top:8px" width="20" height="20" viewBox="0 0 20 20" ><g transform="translate(0.60 0.40)"><path d="M14 14 L15.6 15.6" stroke="#000" stroke-width="2.8" stroke-linecap="round"/><circle cx="9" cy="9" r="6.8" fill="url(#mg)" stroke="#111" stroke-width="1.3"/><path d="M12.5 5 V13" stroke="#111" stroke-width="1.4"/><path d="M5.5 5 L11.5 9 L5.5 13 Z" fill="#f4c860" stroke="#333" stroke-width="0.8"/></g></svg>
<svg class="a" style="left:837px;top:242px" width="24" height="24" viewBox="0 0 24 24" ><path d="M0 24 V10 A10 10 0 0 1 10 0 H24 V17 H17 V24 Z" fill="#98b4d6"/><path d="M0.6 24 V10 A9.4 9.4 0 0 1 10 0.6 H24 M24 17.6 H17.6 V24" fill="none" stroke="#000" stroke-width="1.2"/><rect x="7.5" y="7.5" width="2" height="2" fill="#fff"/><rect x="11.5" y="7.5" width="2" height="2" fill="#fff"/><rect x="15.5" y="7.5" width="2" height="2" fill="#fff"/><rect x="19.5" y="7.5" width="2" height="2" fill="#fff"/><rect x="7.5" y="11.5" width="2" height="2" fill="#fff"/><rect x="7.5" y="15.5" width="2" height="2" fill="#fff"/><rect x="7.5" y="19.5" width="2" height="2" fill="#fff"/></svg>
<svg class="a" style="left:885px;top:242px" width="24" height="24" viewBox="0 0 24 24" ><path d="M0 24 V8 L8 0 H24 V17 H17 V24 Z" fill="#98b4d6"/><path d="M0.6 24 V8.3 L8.3 0.6 H24 M24 17.6 H17.6 V24" fill="none" stroke="#000" stroke-width="1.2"/><rect x="7.5" y="7.5" width="2" height="2" fill="#fff"/><rect x="11.5" y="7.5" width="2" height="2" fill="#fff"/><rect x="15.5" y="7.5" width="2" height="2" fill="#fff"/><rect x="19.5" y="7.5" width="2" height="2" fill="#fff"/><rect x="7.5" y="11.5" width="2" height="2" fill="#fff"/><rect x="7.5" y="15.5" width="2" height="2" fill="#fff"/><rect x="7.5" y="19.5" width="2" height="2" fill="#fff"/></svg>
<svg class="a" style="left:933px;top:242px" width="24" height="24" viewBox="0 0 24 24" ><path d="M0 24 V0 H24 V17 H17 V24 Z" fill="#98b4d6"/><path d="M0.6 24 V0.6 H24 M24 17.6 H17.6 V24" fill="none" stroke="#000" stroke-width="1.2"/><rect x="7.5" y="7.5" width="2" height="2" fill="#fff"/><rect x="11.5" y="7.5" width="2" height="2" fill="#fff"/><rect x="15.5" y="7.5" width="2" height="2" fill="#fff"/><rect x="19.5" y="7.5" width="2" height="2" fill="#fff"/><rect x="7.5" y="11.5" width="2" height="2" fill="#fff"/><rect x="7.5" y="15.5" width="2" height="2" fill="#fff"/><rect x="7.5" y="19.5" width="2" height="2" fill="#fff"/></svg>
<svg class="a" style="left:837px;top:280px" width="24" height="24" viewBox="0 0 24 24" ><rect x="3" y="9" width="18" height="15" fill="#98b4d6"/><path d="M3.6 24 V9.6 H20.4 V24" fill="none" stroke="#000" stroke-width="1.2"/><rect x="11" y="10" width="2" height="2" fill="#fff"/><rect x="11" y="14" width="2" height="2" fill="#fff"/><rect x="11" y="18" width="2" height="2" fill="#fff"/><rect x="11" y="22" width="2" height="2" fill="#fff"/></svg>
<svg class="a" style="left:885px;top:280px" width="24" height="24" viewBox="0 0 24 24" ><path d="M3 24 V9 A9 9 0 0 1 21 9 V24 Z" fill="#98b4d6"/><path d="M3.6 24 V9 A8.4 8.4 0 0 1 20.4 9 V24" fill="none" stroke="#000" stroke-width="1.2"/><rect x="11" y="10" width="2" height="2" fill="#fff"/><rect x="11" y="14" width="2" height="2" fill="#fff"/><rect x="11" y="18" width="2" height="2" fill="#fff"/><rect x="11" y="22" width="2" height="2" fill="#fff"/></svg>
<svg class="a" style="left:933px;top:280px" width="24" height="24" viewBox="0 0 24 24" ><rect x="3" y="0" width="18" height="24" fill="#98b4d6"/><path d="M3.6 24 V0.6 H20.4 V24" fill="none" stroke="#000" stroke-width="1.2"/><rect x="11" y="10" width="2" height="2" fill="#fff"/><rect x="11" y="14" width="2" height="2" fill="#fff"/><rect x="11" y="18" width="2" height="2" fill="#fff"/><rect x="11" y="22" width="2" height="2" fill="#fff"/></svg>
<svg class="a" style="left:837px;top:318px" width="24" height="24" viewBox="0 0 24 24" ><path d="M5 24 V5 H24 V24 Z" fill="#98b4d6"/><path d="M5.6 24 V5.6 H24" fill="none" stroke="#000" stroke-width="1.2"/><rect x="15" y="15" width="9" height="9" fill="#4a70a8"/><circle cx="9.5" cy="9.5" r="8.8" fill="#cad8ec" stroke="#000" stroke-width="1.3"/><rect x="7.5" y="20.5" width="2" height="2" fill="#fff"/><rect x="19.5" y="8.5" width="2" height="2" fill="#fff"/></svg>
<svg class="a" style="left:885px;top:318px" width="24" height="24" viewBox="0 0 24 24" ><path d="M5 24 V5 H24 V24 Z" fill="#98b4d6"/><path d="M5.6 24 V5.6 H24" fill="none" stroke="#000" stroke-width="1.2"/><rect x="13" y="13" width="11" height="11" fill="#4a70a8"/><circle cx="9.5" cy="9.5" r="8.8" fill="#cad8ec" stroke="#000" stroke-width="1.3"/><rect x="18" y="7" width="4" height="1.6" fill="#fff"/></svg>
<svg class="a" style="left:933px;top:318px" width="24" height="24" viewBox="0 0 24 24" ><circle cx="9.5" cy="9.5" r="8.8" fill="#cad8ec" stroke="#000" stroke-width="1.3"/><path d="M5 24 V5 H24 V24 Z" fill="#98b4d6"/><path d="M5.6 24 V5.6 H24" fill="none" stroke="#000" stroke-width="1.2"/><rect x="7.5" y="7.5" width="2" height="2" fill="#fff"/><rect x="11.5" y="7.5" width="2" height="2" fill="#fff"/><rect x="15.5" y="7.5" width="2" height="2" fill="#fff"/><rect x="19.5" y="7.5" width="2" height="2" fill="#fff"/><rect x="7.5" y="11.5" width="2" height="2" fill="#fff"/><rect x="7.5" y="15.5" width="2" height="2" fill="#fff"/><rect x="7.5" y="19.5" width="2" height="2" fill="#fff"/><rect x="15" y="15" width="9" height="9" fill="#4a70a8"/><path d="M15.6 24 V15.6 H24" fill="none" stroke="#000" stroke-width="1.2"/></svg>
<svg class="a" style="left:837px;top:356px" width="24" height="24" viewBox="0 0 24 24" ><circle cx="9.5" cy="9.5" r="8.8" fill="#cad8ec" stroke="#000" stroke-width="1.3"/><path d="M5 24 V5 H24 V24 Z" fill="#98b4d6"/><path d="M5.6 24 V5.6 H24" fill="none" stroke="#000" stroke-width="1.2"/><rect x="7.5" y="7.5" width="2" height="2" fill="#fff"/><rect x="11.5" y="7.5" width="2" height="2" fill="#fff"/><rect x="15.5" y="7.5" width="2" height="2" fill="#fff"/><rect x="19.5" y="7.5" width="2" height="2" fill="#fff"/><rect x="7.5" y="11.5" width="2" height="2" fill="#fff"/><rect x="7.5" y="15.5" width="2" height="2" fill="#fff"/><rect x="7.5" y="19.5" width="2" height="2" fill="#fff"/><rect x="15" y="15" width="9" height="9" fill="#4a70a8"/><path d="M15.6 24 V15.6 H24" fill="none" stroke="#000" stroke-width="1.2"/></svg>
<svg class="a" style="left:885px;top:356px" width="24" height="24" viewBox="0 0 24 24" ><path d="M5 24 V5 H24 V24 Z" fill="#98b4d6"/><path d="M5.6 24 V5.6 H24" fill="none" stroke="#000" stroke-width="1.2"/><circle cx="9.5" cy="9.5" r="8.8" fill="#cad8ec" stroke="#000" stroke-width="1.3"/><rect x="11" y="11" width="13" height="13" fill="#4a70a8"/></svg>
<svg class="a" style="left:933px;top:356px" width="24" height="24" viewBox="0 0 24 24" ><circle cx="9.5" cy="9.5" r="8.8" fill="#cad8ec" stroke="#000" stroke-width="1.3"/><path d="M5 24 V5 H24 V24 Z" fill="#98b4d6"/><path d="M5.6 24 V5.6 H24" fill="none" stroke="#000" stroke-width="1.2"/><path d="M9 24 V9 H24" fill="none" stroke="#fff" stroke-width="1.2" stroke-dasharray="2.5 1"/><rect x="10" y="10" width="14" height="14" fill="#4a70a8"/></svg>
<svg class="a" style="left:785px;top:87px" width="17" height="17" viewBox="0 0 17 17" ><defs><linearGradient id="fi" x1="0" y1="0" x2="1" y2="1"><stop offset="0" stop-color="#9ab4de"/><stop offset="1" stop-color="#fff"/></linearGradient></defs><rect x="1" y="1" width="15" height="15" fill="url(#fi)" opacity="0.85"/><path d="M4 14 L14 3 M7 15 L15 7" stroke="#fff" stroke-width="0.8" opacity="0.6"/></svg>
<svg class="a" style="left:852px;top:87px" width="18" height="18" viewBox="0 0 18 18" ><defs><linearGradient id="sp" x1="0" y1="0" x2="1" y2="1"><stop offset="0" stop-color="#000"/><stop offset="1" stop-color="#ccc"/></linearGradient></defs><rect x="1.5" y="1.5" width="15" height="15" fill="none" stroke="url(#sp)" stroke-width="1.3"/></svg>
<svg class="a" style="left:973px;top:86px" width="18" height="20" viewBox="0 0 18 20" ><path d="M1 5.4 H14" stroke="#000" stroke-width="1.6"/><path d="M13 2 L17 5.4 L13 8.8 Z" fill="#000"/><path d="M1 11.9 H16" stroke="#333" stroke-width="1.6" stroke-dasharray="3 1.1"/><path d="M1 17.4 H17" stroke="#000" stroke-width="1.6"/></svg>
<svg class="a" style="left:761px;top:47px" width="17" height="18" viewBox="0 0 17 18" ><defs><linearGradient id="hf" x1="0" y1="0" x2="1" y2="1"><stop offset="0" stop-color="#000"/><stop offset="0.7" stop-color="#333"/><stop offset="1" stop-color="#bbb"/></linearGradient></defs><path d="M1 17 V1.5 H16" fill="none" stroke="url(#hf)" stroke-width="2.2"/><rect x="2.1" y="2.6" width="13" height="12.5" fill="#fff"/><path d="M0.3 17.3 C2 16.5 5 16.5 8 14 L13.5 8.5 L15.5 5 L13 3.5 L9.5 7 L4.5 11.5 C2.5 13.5 1.5 15.5 0.3 17.3 Z" fill="#111"/><path d="M5 13.5 L12 7" stroke="#999" stroke-width="0.6"/><path d="M12.5 3.8 L16.6 1.4 L15.6 5.6 Z" fill="#f8a060"/></svg>
<div class="a" style="left:760px;top:39px;width:1px;height:34px;background:#d8d4d0"></div>
<svg class="a" style="left:742px;top:39px" width="18" height="18" viewBox="0 0 18 18" ><rect x="1.5" y="0.8" width="15" height="15.5" rx="3" fill="url(#bt)" stroke="#888" stroke-width="1"/><path d="M6.5 5.5 L9.5 4 L11 4 L11 12 L8.5 12 L8.5 7 L6.5 7.5 Z" fill="#fff" stroke="#666" stroke-width="0.9"/></svg>
<svg class="a" style="left:1086px;top:46px" width="12" height="12" viewBox="0 0 12 12" ><rect x="0.5" y="0.5" width="11" height="11" rx="2" fill="#fafafa" stroke="#888" stroke-width="1"/><path d="M3 6 L8.5 3 L8.5 9 Z" fill="#888"/></svg>
<svg class="a" style="left:1122px;top:46px" width="12" height="12" viewBox="0 0 12 12" ><rect x="0.5" y="0.5" width="11" height="11" rx="2" fill="#fafafa" stroke="#888" stroke-width="1"/><path d="M3.3 3.3 L8.7 8.7 M8.7 3.3 L3.3 8.7" stroke="#777" stroke-width="2"/></svg>
<div class="t" style="left:1159px;top:152px;font-size:12px;color:#2e3436;letter-spacing:-0.17px;transform:rotate(-90deg);transform-origin:0 0">Layers (Shift+Ctrl+L)</div>
<svg class="a" style="left:1156px;top:154px" width="18" height="15" viewBox="0 0 18 15" ><path d="M1.5 10.5 L5 7.5 L16 7.5 L12.5 10.5 Z M1.5 10.5 V12.5 L5 14 H12.5 L16 9.5" fill="#fff" stroke="#222" stroke-width="0.9"/><path d="M2.5 7 L6 4 L17 4 L13.5 7 Z" fill="#fff" stroke="#222" stroke-width="0.9"/><path d="M3.5 3.8 L7 1 L17 1 L14 3.8" fill="#fff" stroke="#222" stroke-width="0.9"/></svg>
<div class="a" style="left:1188px;top:189px;width:36px;height:1px;background:#dcd8d5"></div>
<div class="a" style="left:1188px;top:273px;width:36px;height:1px;background:#dcd8d5"></div>
<div class="a" style="left:1188px;top:357px;width:36px;height:1px;background:#dcd8d5"></div>
<div class="a" style="left:1188px;top:476px;width:36px;height:1px;background:#dcd8d5"></div>
<svg class="a" style="left:1197.0px;top:50.5px" width="18" height="18" viewBox="0 0 18 18" ><path d="M3.5 1.5 H10 L13.5 5 V16.5 H3.5 Z" fill="#fafafa" stroke="#aaa" stroke-width="1"/><circle cx="13" cy="11.5" r="4" fill="#2a5aa8" stroke="#fff" stroke-width="0.8"/><path d="M13 9.2 V13.8 M10.7 11.5 H15.3" stroke="#fff" stroke-width="1.3"/></svg>
<svg class="a" style="left:1197.0px;top:86.5px" width="18" height="18" viewBox="0 0 18 18" ><path d="M1.5 4 H7 L8.5 5.5 H16.5 V16 H1.5 Z" fill="#c8aa88" stroke="#b09070" stroke-width="1"/><rect x="5" y="7.5" width="9" height="4.5" fill="#f4ece4" stroke="#888" stroke-width="0.7"/><path d="M1.5 11 C6 13 10 9 16.5 11 V16 H1.5 Z" fill="#e8c8b8" opacity="0.9"/></svg>
<svg class="a" style="left:1197.0px;top:121.5px" width="18" height="18" viewBox="0 0 18 18" ><path d="M7.5 2 H10.5 V9 H13 L9 13 L5 9 H7.5 Z" fill="#fff" stroke="#333" stroke-width="1"/><path d="M2 11 V16.5 H16 V11 H13 V13.5 H5 V11 Z" fill="#3a6ab8" stroke="#2a4a88" stroke-width="0.8"/></svg>
<svg class="a" style="left:1197.0px;top:155.5px" width="18" height="18" viewBox="0 0 18 18" ><rect x="2" y="5" width="14" height="8" rx="1.5" fill="#555" stroke="#222" stroke-width="1"/><rect x="4.5" y="1.5" width="9" height="4" fill="#fff" stroke="#222" stroke-width="1"/><rect x="4.5" y="10.5" width="9" height="6" fill="#fff" stroke="#222" stroke-width="1"/><rect x="5.5" y="6.5" width="4" height="1.5" fill="#ddd"/></svg>
<svg class="a" style="left:1197.0px;top:205.0px" width="18" height="18" viewBox="0 0 18 18" ><path d="M6.5 1.5 H12 L15.5 5 V16.5 H6.5 Z" fill="#f0f0f0" stroke="#222" stroke-width="1"/><path d="M1 9.5 H10" stroke="#000" stroke-width="1.3"/><path d="M9 6.5 L12.5 9.5 L9 12.5 Z" fill="#000"/></svg>
<svg class="a" style="left:1197.0px;top:240.0px" width="18" height="18" viewBox="0 0 18 18" ><path d="M2.5 1.5 H8 L11.5 5 V16.5 H2.5 Z" fill="#f0f0f0" stroke="#222" stroke-width="1"/><path d="M7 10.5 H14" stroke="#000" stroke-width="1.3"/><path d="M13 7.5 L16.8 10.5 L13 13.5 Z" fill="#000"/></svg>
<svg class="a" style="left:1197.0px;top:288.5px" width="18" height="18" viewBox="0 0 18 18" ><path d="M6 4.5 L2 8 L6 11.5 M2.5 8 H12 C15 8 15.5 13 12 13 H7" fill="none" stroke="#e0a830" stroke-width="2"/><path d="M7 15 H11.5 C16 15 16 11 13 10.5" fill="none" stroke="#f4d070" stroke-width="1.2"/></svg>
<svg class="a" style="left:1197.0px;top:323.5px" width="18" height="18" viewBox="0 0 18 18" ><path d="M12 4.5 L16 8 L12 11.5 M15.5 8 H6 C3 8 2.5 13 6 13 H11" fill="none" stroke="#ddd" stroke-width="2"/></svg>
<svg class="a" style="left:1197.0px;top:373.0px" width="18" height="18" viewBox="0 0 18 18" ><rect x="2.5" y="1.5" width="9" height="10" fill="#fafafa" stroke="#555" stroke-width="1"/><path d="M4 4.5 H10 M4 6.5 H10 M4 8.5 H8" stroke="#777" stroke-width="0.8"/><rect x="7.5" y="7.5" width="9" height="9" fill="#fafafa" stroke="#555" stroke-width="1"/><path d="M9 11 H15 M9 13 H13" stroke="#777" stroke-width="0.8"/></svg>
<svg class="a" style="left:1197.0px;top:407.0px" width="18" height="18" viewBox="0 0 18 18" ><path d="M4.5 1.5 L11.5 11.5 M13.5 1.5 L6.5 11.5" stroke="#777" stroke-width="2"/><path d="M4.5 1.5 L11.5 11.5 M13.5 1.5 L6.5 11.5" stroke="#f0f0f0" stroke-width="0.9"/><circle cx="5" cy="13.8" r="2.9" fill="#fff" stroke="#d42020" stroke-width="2.2"/><circle cx="13" cy="13.8" r="2.9" fill="#fff" stroke="#d42020" stroke-width="2.2"/></svg>
<svg class="a" style="left:1197.0px;top:442.0px" width="18" height="18" viewBox="0 0 18 18" ><rect x="2" y="3" width="11" height="14" rx="1" fill="#d4a070" stroke="#806040" stroke-width="1"/><rect x="5.5" y="1.5" width="5" height="3" rx="1" fill="#ddd" stroke="#555" stroke-width="0.8"/><rect x="6.5" y="6.5" width="10" height="10.5" fill="#fafafa" stroke="#555" stroke-width="1"/><path d="M8.5 9.5 H14.5 M8.5 11.5 H14.5 M8.5 13.5 H12.5" stroke="#777" stroke-width="0.8"/></svg>
<svg class="a" style="left:1196.5px;top:491.5px" width="20" height="20" viewBox="0 0 20 20" ><path d="M14 14 L15.6 15.6" stroke="#000" stroke-width="2.8" stroke-linecap="round"/><circle cx="9" cy="9" r="6.8" fill="url(#mg)" stroke="#111" stroke-width="1.3"/><rect x="4.5" y="5.5" width="9" height="7" fill="#fff" stroke="#222" stroke-width="1.2" stroke-dasharray="1.2 1.2"/></svg>
<svg class="a" style="left:1196.5px;top:526.5px" width="20" height="20" viewBox="0 0 20 20" ><path d="M14 14 L15.6 15.6" stroke="#000" stroke-width="2.8" stroke-linecap="round"/><circle cx="9" cy="9" r="6.8" fill="url(#mg)" stroke="#111" stroke-width="1.3"/><rect x="4" y="4.5" width="5.5" height="5.5" fill="#fff" stroke="#333" stroke-width="1"/><rect x="8" y="8" width="5.5" height="5.5" fill="#fde0c0" stroke="#333" stroke-width="1"/></svg>
<div class="a" style="left:1232px;top:84px;width:36px;height:1px;background:#dcd8d5"></div>
<div class="a" style="left:1232px;top:273px;width:36px;height:1px;background:#dcd8d5"></div>
<div class="a" style="left:1232px;top:497px;width:36px;height:1px;background:#dcd8d5"></div>
<div class="a" style="left:1232px;top:43px;width:36px;height:34px;background:#d6d1cd;border-radius:6px"></div>
<div class="a" style="left:1232px;top:281px;width:36px;height:34px;background:#d6d1cd;border-radius:6px"></div>
<div class="a" style="left:1232px;top:386px;width:36px;height:34px;background:#d6d1cd;border-radius:6px"></div>
<div class="a" style="left:1232px;top:505px;width:36px;height:33px;background:#d6d1cd;border-radius:6px"></div>
<svg class="a" style="left:1240px;top:50px" width="20" height="20" viewBox="0 0 20 20" ><path d="M4.9 2 L7.8 4.9 L4.9 7.8 L2 4.9 Z" fill="#d0e0f8" stroke="#2a5aa8" stroke-width="1.5"/><path d="M7 7 L11 11" stroke="#000" stroke-width="1.3"/><path d="M8.8 12.8 L12.8 12.8 L12.8 8.8 Z" fill="#000"/><path d="M15 12 L17.8 14.8 L15 17.6 L12.2 14.8 Z" fill="#90d090" stroke="#555" stroke-width="1.4"/></svg>
<svg class="a" style="left:1240px;top:98px" width="20" height="20" viewBox="0 0 20 20" ><path d="M4.9 2 L7.8 4.9 L4.9 7.8 L2 4.9 Z" fill="#d0e0f8" stroke="#2a5aa8" stroke-width="1.5"/><path d="M7 7 L11 11" stroke="#000" stroke-width="1.3"/><path d="M8.8 12.8 L12.8 12.8 L12.8 8.8 Z" fill="#000"/><path d="M15 12 L17.8 14.8 L15 17.6 L12.2 14.8 Z" fill="#90d090" stroke="#555" stroke-width="1.4"/></svg>
<svg class="a" style="left:1240px;top:288px" width="20" height="20" viewBox="0 0 20 20" ><path d="M4.9 2 L7.8 4.9 L4.9 7.8 L2 4.9 Z" fill="#d0e0f8" stroke="#2a5aa8" stroke-width="1.5"/><path d="M7 7 L11 11" stroke="#000" stroke-width="1.3"/><path d="M8.8 12.8 L12.8 12.8 L12.8 8.8 Z" fill="#000"/><path d="M15 12 L17.8 14.8 L15 17.6 L12.2 14.8 Z" fill="#90d090" stroke="#555" stroke-width="1.4"/></svg>
<svg class="a" style="left:1240px;top:511.5px" width="20" height="20" viewBox="0 0 20 20" ><path d="M4.9 2 L7.8 4.9 L4.9 7.8 L2 4.9 Z" fill="#d0e0f8" stroke="#2a5aa8" stroke-width="1.5"/><path d="M7 7 L11 11" stroke="#000" stroke-width="1.3"/><path d="M8.8 12.8 L12.8 12.8 L12.8 8.8 Z" fill="#000"/><path d="M15 12 L17.8 14.8 L15 17.6 L12.2 14.8 Z" fill="#90d090" stroke="#555" stroke-width="1.4"/></svg>
<svg class="a" style="left:1240px;top:133px" width="20" height="20" viewBox="0 0 20 20" ><path d="M10 3 V15 H3" fill="none" stroke="#cfcac6" stroke-width="1.2" stroke-dasharray="1.5 1.2"/></svg>
<svg class="a" style="left:1240px;top:168px" width="20" height="20" viewBox="0 0 20 20" ><path d="M10 3 V15 H3" fill="none" stroke="#cfcac6" stroke-width="1.2" stroke-dasharray="1.5 1.2"/><circle cx="10" cy="15" r="2" fill="#cfcac6"/></svg>
<svg class="a" style="left:1240px;top:203px" width="20" height="20" viewBox="0 0 20 20" ><path d="M10 3 V15 H3" fill="none" stroke="#cfcac6" stroke-width="1.2" stroke-dasharray="1.5 1.2"/><ellipse cx="10" cy="7" rx="1.5" ry="2.5" fill="#cfcac6"/></svg>
<svg class="a" style="left:1240px;top:238px" width="20" height="20" viewBox="0 0 20 20" ><path d="M12 3 V15 H3" fill="none" stroke="#cfcac6" stroke-width="1.2" stroke-dasharray="1.5 1.2"/><circle cx="6" cy="8" r="1.8" fill="none" stroke="#cfcac6" stroke-width="1"/></svg>
<svg class="a" style="left:1240px;top:322.5px" width="20" height="20" viewBox="0 0 20 20" ><path d="M2.7 4 C7 4.3 11.5 6.5 11.5 11 C11.5 13 11 15 10.5 16 C13 15.5 16 14 17.5 11.5" fill="none" stroke="#333" stroke-width="1.5"/><path d="M5 4.3 L7 4.8 M10 7 L11 9 M11.5 12 L11.2 14" stroke="#7ad07a" stroke-width="0.6"/></svg>
<svg class="a" style="left:1240px;top:357.5px" width="20" height="20" viewBox="0 0 20 20" ><path d="M2.5 17 L17.5 3 M3 14.5 C8 12 12 9 17 7.5" fill="none" stroke="#444" stroke-width="1.1"/><circle cx="10" cy="10" r="2.2" fill="#6aa090" stroke="#333" stroke-width="0.9"/></svg>
<svg class="a" style="left:1240px;top:393px" width="20" height="20" viewBox="0 0 20 20" ><path d="M3 2.8 C8 3.5 11 6 10.5 11 M10.5 11 C12 11.5 15 9 17 6.5" fill="none" stroke="#444" stroke-width="1.3"/><rect x="7.8" y="9.2" width="4.2" height="4.2" transform="rotate(45 9.9 11.3)" fill="#5aa088" stroke="#222" stroke-width="0.9"/></svg>
<svg class="a" style="left:1240px;top:426.5px" width="20" height="20" viewBox="0 0 20 20" ><path d="M3 4.5 L9.5 6 C10.5 9 10 12.5 9.5 15.5 C12 15.5 15 13.5 17 11" fill="none" stroke="#444" stroke-width="1.3"/><rect x="8" y="5" width="3.8" height="3.8" fill="#5aa088" stroke="#222" stroke-width="0.9"/></svg>
<svg class="a" style="left:1240px;top:462.5px" width="20" height="20" viewBox="0 0 20 20" ><path d="M2.5 15.5 L7 6 M4.5 17 L9 7.5 M11 13 L15.5 3.5 M13 14.5 L17.5 5" fill="none" stroke="#d02828" stroke-width="1.1"/><path d="M3 12.5 L17 7.5" stroke="#333" stroke-width="1"/><circle cx="10" cy="10" r="2" fill="#6aa090" stroke="#333" stroke-width="0.8"/></svg>
<svg class="a" style="left:196px;top:634px" width="20" height="17" viewBox="0 0 20 17" ><path d="M2 10 C6 4 14 4 18 10 C14 15.5 6 15.5 2 10 Z" fill="#fff" stroke="#111" stroke-width="1.4"/><circle cx="10" cy="10.3" r="3.2" fill="#111"/><circle cx="9" cy="9.2" r="0.9" fill="#fff"/><path d="M3 6 L5 7.8 M6.5 2.5 L7.5 5.8 M10 1.5 V5.3 M13.5 2.5 L12.5 5.8 M17 6 L15 7.8" stroke="#111" stroke-width="1.3"/></svg>
<svg class="a" style="left:234px;top:634px" width="18" height="20" viewBox="0 0 18 20" ><path d="M4 6 C3 2 7 1 9 2.2 C11 3.5 11.5 6 12 8.5" fill="none" stroke="#111" stroke-width="1.5"/><defs><linearGradient id="lk2" x1="0" y1="0" x2="1" y2="0"><stop offset="0" stop-color="#fff"/><stop offset="1" stop-color="#f0d060"/></linearGradient></defs><path d="M3 9 L13 7.8 L14.5 16 L4.5 17.5 Z" fill="url(#lk2)" stroke="#111" stroke-width="1.3"/><path d="M8.5 11 L9.8 10.8 L10.2 14 L9 14.2 Z" fill="#111"/></svg>
<svg class="a" style="left:742px;top:575px" width="18" height="18" viewBox="0 0 18 18" ><rect x="0.5" y="0.5" width="17" height="17" rx="4" fill="#f8f7f6" stroke="#e4e0dc" stroke-width="1"/><path d="M4 3.5 L15 12 L6 15 C4 13 3 8 4 3.5 Z" fill="#cad8ee"/><path d="M9 8 L15 12 L9.5 14 Z" fill="#f4c8c8"/><path d="M4 3.5 L15 12" stroke="#b8b4b0" stroke-width="0.6"/></svg>
<svg class="a" style="left:421px;top:578px" width="14" height="20" viewBox="0 0 14 20" ><path d="M1.2 1 V17.3 L5.2 13.5 L8 18.7 L10.2 17.8 L7.7 12.8 L12.6 12.8 Z" fill="#fff" stroke="#000" stroke-width="1.1" stroke-linejoin="miter"/></svg>
</div></body></html>
